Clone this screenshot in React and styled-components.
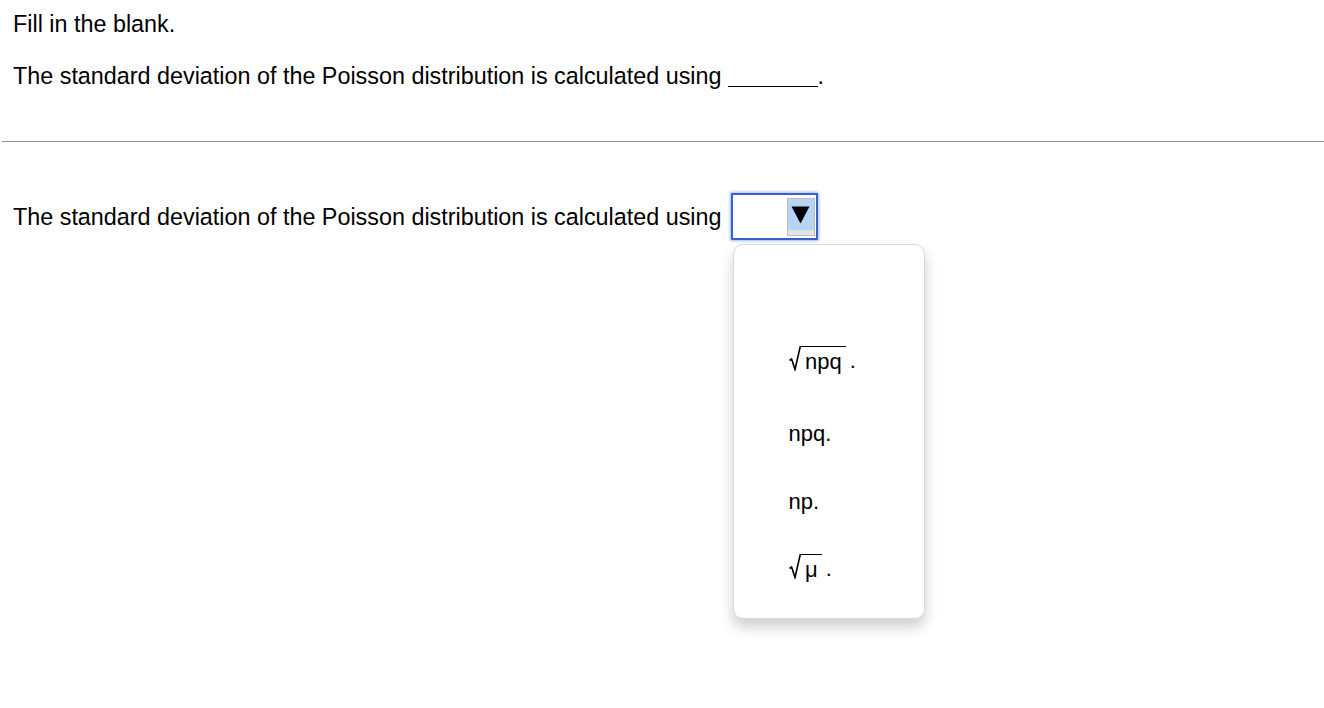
import React from "react";
import styled, { createGlobalStyle } from "styled-components";

const Global = createGlobalStyle`
  body {
    margin: 0;
    background: #fff;
    font-family: "Liberation Sans", Arial, sans-serif;
    color: #000;
  }
`;

const Page = styled.div`
  padding: 10px 0 0 2px;
  min-height: 100vh;
  box-sizing: border-box;
`;

const Para = styled.p`
  margin: 0;
  padding-left: 11px;
  font-size: 23.35px;
  line-height: 28px;
  & + & {
    margin-top: 24px;
  }
`;

const Blank = styled.span`
  display: inline-block;
  width: 90px;
  border-bottom: 1.5px solid #000;
  margin-left: 6px;
  vertical-align: -3px;
  height: 20px;
`;

const Rule = styled.hr`
  margin: 51px 0 0;
  border: 0;
  border-top: 1.5px solid #8a9192;
`;

const AnswerRow = styled.div`
  display: flex;
  align-items: flex-start;
  padding: 51px 0 0 11px;
  font-size: 23.35px;
`;

const Label = styled.span`
  line-height: 28px;
  margin-top: 10px;
`;

const SelectWrap = styled.div`
  display: flex;
  flex-direction: column;
  margin-left: 9px;
`;

const SelectBox = styled.div`
  width: 82px;
  height: 43px;
  border: 2px solid #3a60cf;
  box-shadow: 0 0 3px 1px rgba(80, 130, 230, 0.55);
  border-radius: 1px;
  display: flex;
  justify-content: flex-end;
  align-items: center;
  padding-right: 1px;
  background: #fff;
`;

const ArrowBtn = styled.div`
  width: 26px;
  height: 33px;
  background: linear-gradient(#b6d4f5 86%, #e4e4e4 86%);
  border: 1px solid #bdbfc2;
  display: flex;
  align-items: center;
  justify-content: center;
  padding-bottom: 3px;
  box-sizing: content-box;
`;

const Menu = styled.div`
  margin-top: 4px;
  margin-left: 2px;
  width: 192px;
  height: 375px;
  border: 1px solid #d9d9d9;
  border-radius: 10px;
  box-shadow: 0 8px 14px rgba(0, 0, 0, 0.2);
  background: #fff;
  display: flex;
  flex-direction: column;
  padding: 100px 0 0 55px;
  box-sizing: border-box;
`;

const Option = styled.div`
  height: ${(p) => p.$h || 70}px;
  font-size: 22px;
  display: flex;
  align-items: flex-start;
  padding-top: ${(p) => p.$top || 0}px;
  box-sizing: border-box;
`;

const Root = styled.span`
  display: inline-flex;
  align-items: flex-start;
  font-size: 22px;
`;

const Radicand = styled.span`
  border-top: 1.6px solid #000;
  margin-top: 1px;
  margin-left: -0.5px;
  padding: 4px 4px 0 5px;
  line-height: 22px;
`;

const Dot = styled.span`
  padding-top: 5px;
  line-height: 22px;
  margin-left: 4px;
`;

const Sqrt = ({ children }) => (
  <Root>
    <svg width="12" height="26" viewBox="0 0 12 26">
      <path
        d="M0.5 15.5 L2.6 14 L6 24.5 L11.2 1.8 L12 1.8"
        fill="none"
        stroke="#000"
        strokeWidth="1.6"
        strokeLinejoin="miter"
      />
    </svg>
    <Radicand>{children}</Radicand>
    <Dot>.</Dot>
  </Root>
);

export default function App() {
  return (
    <Page>
      <Global />
      <Para>Fill in the blank.</Para>
      <Para>
        The standard deviation of the Poisson distribution is calculated using
        <Blank />.
      </Para>
      <Rule />
      <AnswerRow>
        <Label>The standard deviation of the Poisson distribution is calculated using</Label>
        <SelectWrap>
          <SelectBox>
            <ArrowBtn>
              <svg width="19" height="18" viewBox="0 0 19 18">
                <polygon points="0.5,0.5 18.5,0.5 9.5,17.5" fill="#000" />
              </svg>
            </ArrowBtn>
          </SelectBox>
          <Menu>
            <Option $h={70}>
              <Sqrt>npq</Sqrt>
            </Option>
            <Option $h={70} $top={6}>npq.</Option>
            <Option $h={68} $top={4}>np.</Option>
            <Option $h={60}>
              <Sqrt>μ</Sqrt>
            </Option>
          </Menu>
        </SelectWrap>
      </AnswerRow>
    </Page>
  );
}
